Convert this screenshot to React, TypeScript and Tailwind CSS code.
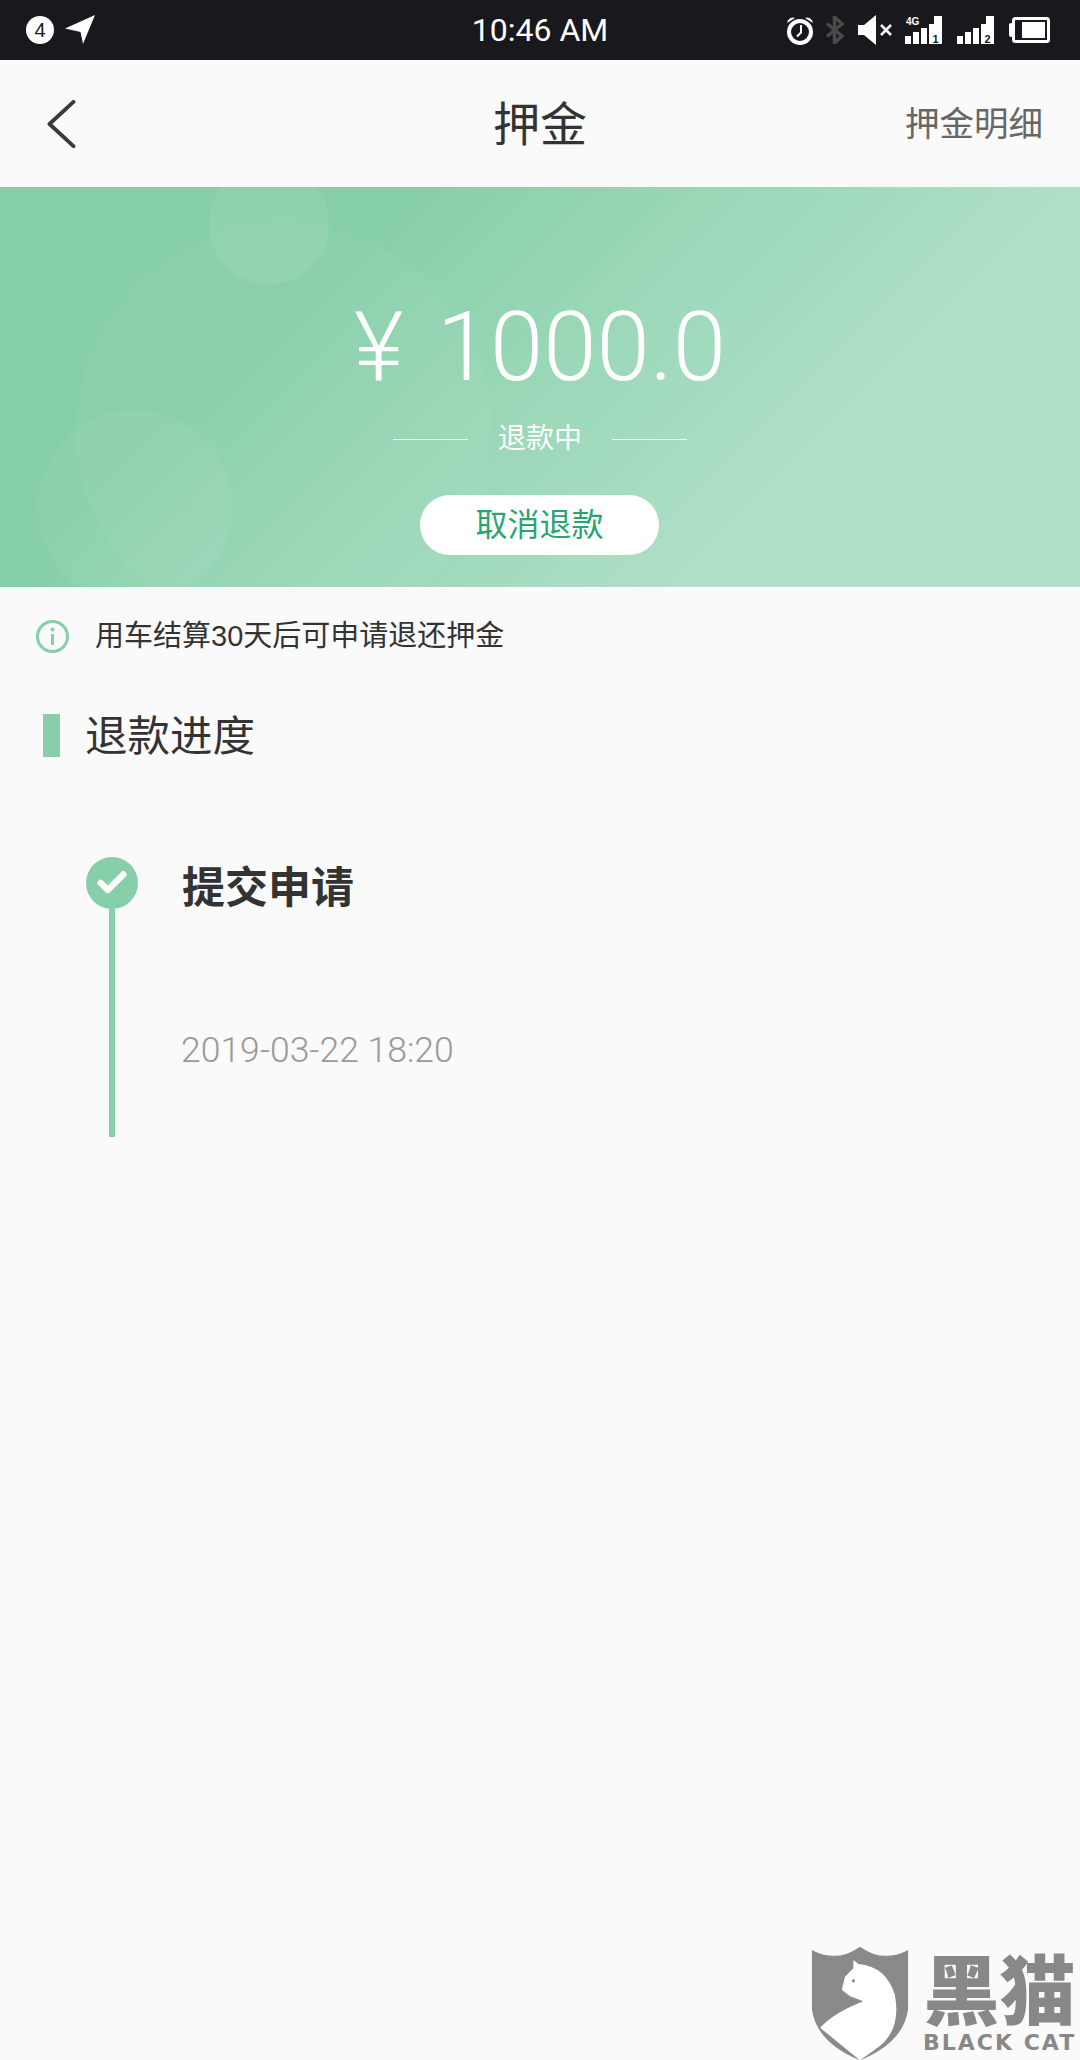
import React from 'react';
import { Check } from 'lucide-react';

const SignalIcon = ({ sim, label }: { sim: string; label?: string }) => (
  <svg width="38" height="28" viewBox="0 0 38 28">
    {label && <text x="1" y="9" fontSize="10" fontWeight="700" fill="#fff" fontFamily="Liberation Sans">{label}</text>}
    <rect x="0" y="20" width="6" height="8" fill="#fff" />
    <rect x="8" y="16" width="6" height="12" fill="#fff" />
    <rect x="16" y="12" width="6" height="16" fill="#fff" />
    <path d="M24 8h5V0h8v28H24z" fill="#fff" />
    <text x="27.500" y="27" fontSize="11" fontWeight="700" fill="#18181d" fontFamily="Liberation Sans">{sim}</text>
  </svg>
);

const StatusBar = () => (
  <div className="grid grid-cols-[1fr_auto_1fr] items-center h-[60px] bg-[#18181d] text-white">
    <div className="flex items-center pl-[26px] gap-[11px]">
      <div className="flex items-center justify-center w-[28px] h-[28px] rounded-full bg-white text-[#18181d] text-[20px] leading-none">4</div>
      <svg width="30" height="30" viewBox="0 0 30 30" className="-mt-[1px]">
        <path d="M30 0 18 29 15.500 17 0 13.500z" fill="#fff" />
      </svg>
    </div>
    <div className="font-['Roboto','Liberation_Sans',sans-serif] text-[32px] leading-none">10:46 AM</div>
    <div className="flex items-center justify-end pr-[30px]">
      <svg width="28" height="30" viewBox="0 0 28 30" className="mr-[11px]">
        <circle cx="14" cy="17" r="11" fill="none" stroke="#fff" strokeWidth="4" />
        <path d="M15 10v7.500l-4 4" fill="none" stroke="#fff" strokeWidth="2" />
        <path d="M1 8a6 6 0 0 1 8-5zM27 8a6 6 0 0 0-8-5z" fill="#fff" />
      </svg>
      <svg width="20" height="28" viewBox="0 0 20 28" className="mr-[13px]">
        <path d="M2 7.500 17 20 9.500 27V1L17 8 2 20.500" fill="none" stroke="#4a4a4a" strokeWidth="3.500" />
      </svg>
      <svg width="18" height="30" viewBox="0 0 18 30" className="mr-[4px]">
        <path d="M0 10h6L18 0v30L6 20H0z" fill="#fff" />
      </svg>
      <svg width="12" height="12" viewBox="0 0 12 12" className="mr-[13px]">
        <path d="M1 1l10 10M11 1 1 11" stroke="#fff" strokeWidth="2.500" />
      </svg>
      <div className="mr-[14px] flex"><SignalIcon sim="1" label="4G" /></div>
      <div className="mr-[13px] flex"><SignalIcon sim="2" /></div>
      <svg width="42" height="26" viewBox="0 0 42 26">
        <path d="M3 8V18" stroke="#fff" strokeWidth="4" strokeLinecap="round" />
        <rect x="5.500" y="1.500" width="35" height="23" rx="2" fill="none" stroke="#fff" strokeWidth="3" />
        <rect x="14" y="5" width="23" height="16" fill="#fff" />
      </svg>
    </div>
  </div>
);

const Hero = () => (
  <div className="relative h-[400px] overflow-hidden flex flex-col items-center bg-[linear-gradient(135deg,#86cfa8_27%,#b0e0c8_74%)]">
    {/* background bubbles */}
    <div className="absolute left-[209px] top-[-23px] w-[120px] h-[120px] rounded-full bg-white/[0.08]" />
    <div className="absolute left-[76px] top-[36px] w-[416px] h-[416px] rounded-full bg-white/[0.04]" />
    <div className="absolute left-[38px] top-[223px] w-[194px] h-[194px] rounded-full bg-white/[0.05]" />

    <div className="relative flex items-center h-[100px] mt-[110px] text-white font-['Roboto','Liberation_Sans',sans-serif] font-light text-[96px] leading-none">
      <span>¥</span>
      <span className="ml-[33px]">1000.0</span>
    </div>
    <div className="relative flex items-center mt-[22px] text-white">
      <div className="w-[75px] h-px bg-white" />
      <span className="mx-[30px] text-[28px] leading-[40px]">退款中</span>
      <div className="w-[75px] h-px bg-white" />
    </div>
    <div className="relative flex items-center justify-center mt-[36px] -ml-[1px] w-[239px] h-[60px] rounded-full bg-white text-[#2aa56e] text-[32px] leading-none">
      取消退款
    </div>
  </div>
);

const App: React.FC = () => {
  return (
    <div className="relative w-[1080px] h-[2060px] overflow-hidden bg-[#fafafa] font-['Liberation_Sans','Noto_Sans_CJK_SC',sans-serif]">
      <StatusBar />

      <div className="relative flex items-center justify-between h-[127px] pl-[46px] pr-[37px]">
        <svg width="30" height="48" viewBox="0 0 30 50">
          <path d="M28 2 3 25l25 23" fill="none" stroke="#3a3a3a" strokeWidth="4" strokeLinecap="round" strokeLinejoin="round" />
        </svg>
        <div className="absolute left-0 right-0 top-[41px] text-center text-[47px] text-[#333] leading-none">押金</div>
        <div className="text-[34.500px] text-[#666] leading-none mt-[2px]">押金明细</div>
      </div>

      <Hero />

      <div className="flex items-center h-[98px] pl-[36px]">
        <svg width="33" height="33" viewBox="0 0 33 33">
          <circle cx="16.500" cy="16.500" r="15" fill="none" stroke="#86cfa8" strokeWidth="3" />
          <circle cx="16.500" cy="9.500" r="2" fill="#86cfa8" />
          <path d="M16.500 14v11" stroke="#86cfa8" strokeWidth="3" />
        </svg>
        <div className="ml-[26px] text-[29px] text-[#333] leading-none">用车结算30天后可申请退还押金</div>
      </div>

      <div className="flex items-center h-[43px] mt-[29px] pl-[43px]">
        <div className="w-[17px] h-full bg-[#86cfa8]" />
        <div className="ml-[25px] mt-[3px] text-[42.500px] text-[#333] leading-none">退款进度</div>
      </div>

      <div className="flex mt-[100px] ml-[86px]">
        <div className="flex flex-col items-center w-[52px]">
          <div className="flex items-center justify-center w-[52px] h-[52px] rounded-full bg-[#86cfa8]">
            <Check size={34} color="#fff" strokeWidth={4.500} />
          </div>
          <div className="w-[6px] h-[228px] bg-[#86cfa8]" />
        </div>
        <div className="ml-[44px]">
          <div className="h-[60px] mt-[1px] text-[43px] font-bold text-[#333] leading-[60px]">提交申请</div>
          <div className="mt-[112px] -ml-[1px] font-['Roboto','Liberation_Sans',sans-serif] font-light text-[#999] text-[35.500px] leading-[40px]">2019-03-22 18:20</div>
        </div>
      </div>

      {/* watermark */}
      <div className="absolute right-0 bottom-0 flex items-start w-[270px] h-[115px]">
        <svg width="100" height="116" viewBox="60 40 300 350">
          <path d="M65 55Q140 95 210 45 280 95 355 55V235Q340 335 210 388 80 335 65 235Z" fill="#8a8a8a" />
          <path d="M190 85 205 97Q290 105 315 190 335 290 270 345L210 388 90 290Q130 245 220 210L180 195 155 175 165 135 190 110Z" fill="#fff" />
          <circle cx="190" cy="148" r="5" fill="#8a8a8a" />
        </svg>
        <div className="ml-[13px] flex flex-col items-center text-[#888]">
          <div className="text-[76px] font-black leading-none mt-[3px] font-['Noto_Sans_CJK_SC',sans-serif] whitespace-nowrap">黑猫</div>
          <div className="text-[22px] font-bold leading-none mt-[8px] tracking-[2px] font-['DejaVu_Sans',sans-serif] whitespace-nowrap">BLACK CAT</div>
        </div>
      </div>
    </div>
  );
};

export default App;
